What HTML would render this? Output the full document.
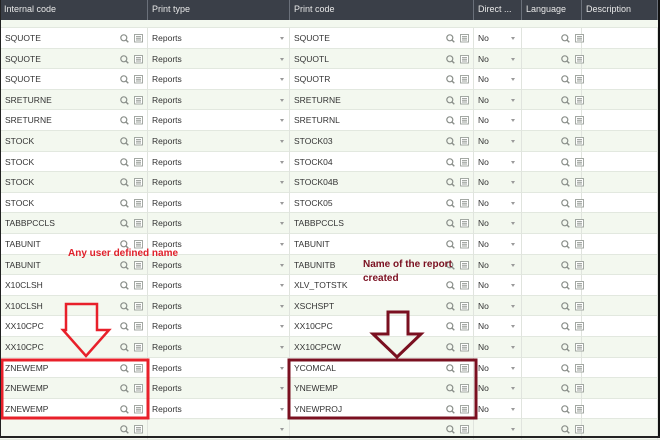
<!DOCTYPE html>
<html><head><meta charset="utf-8"><style>
*{margin:0;padding:0;box-sizing:border-box}
body{width:660px;height:438px;overflow:hidden;background:#fff;font-family:"Liberation Sans",sans-serif;font-size:8.5px;color:#333;position:relative}
.hdr{position:absolute;left:0;top:0;width:660px;height:20px;background:#3a3f48;color:#e8e8e8;font-size:9px}
.hdr div{position:absolute;top:0;height:20px;line-height:18px;padding-left:4px;border-right:1px solid #6a707a}
.r{position:absolute;left:0;width:660px;height:20.6px;border-bottom:1px solid #e2e8df}
.g{background:#f3f8ef}
.c{position:absolute;top:0;height:20.6px;line-height:20px;padding-left:4px;border-right:1px solid #e0e4de;white-space:nowrap}
.c1{left:1px;width:147px}.c2{left:148px;width:142px}.c3{left:290px;width:184px}.c4{left:474px;width:48px}.c5{left:522px;width:60px}.c6{left:582px;width:76px}
.ic{position:absolute;top:6px;width:24px;height:9px}
.dd{position:absolute;top:9px;width:0;height:0;border-left:2.5px solid transparent;border-right:2.5px solid transparent;border-top:3px solid #999}
.frame{position:absolute;right:0;top:0;width:2px;height:438px;background:#111}
.frameb{position:absolute;left:0;bottom:0;width:660px;height:2px;background:#222}
.framel{position:absolute;left:0;top:0;width:1px;height:438px;background:#222}
.ann{position:absolute;font-weight:bold;font-size:10px;font-family:"Liberation Sans",sans-serif}
</style></head><body>
<svg width="0" height="0" style="position:absolute"><defs>
<symbol id="i" viewBox="0 0 24 9"><circle cx="3.8" cy="3.8" r="3" fill="none" stroke="#8a8f8a" stroke-width="1.2"/><line x1="6" y1="6" x2="8.3" y2="8.3" stroke="#8a8f8a" stroke-width="1.4"/><rect x="14.5" y="0.5" width="8" height="7.5" fill="#fff" stroke="#9a9f9a" stroke-width="0.9"/><line x1="16" y1="2.6" x2="21" y2="2.6" stroke="#9a9f9a"/><line x1="16" y1="4.3" x2="21" y2="4.3" stroke="#9a9f9a"/><line x1="16" y1="6" x2="21" y2="6" stroke="#9a9f9a"/></symbol>
</defs></svg>
<div class="hdr"><div style="left:0;width:148px">Internal code</div><div style="left:148px;width:142px">Print type</div><div style="left:290px;width:184px">Print code</div><div style="left:474px;width:48px">Direct ...</div><div style="left:522px;width:60px">Language</div><div style="left:582px;width:76px">Description</div></div>
<div class="r g" style="top:20px;height:8px"></div>

<div id="rows"></div>
<script>
var d=[["SQUOTE","SQUOTE"],["SQUOTE","SQUOTL"],["SQUOTE","SQUOTR"],["SRETURNE","SRETURNE"],["SRETURNE","SRETURNL"],["STOCK","STOCK03"],["STOCK","STOCK04"],["STOCK","STOCK04B"],["STOCK","STOCK05"],["TABBPCCLS","TABBPCCLS"],["TABUNIT","TABUNIT"],["TABUNIT","TABUNITB"],["X10CLSH","XLV_TOTSTK"],["X10CLSH","XSCHSPT"],["XX10CPC","XX10CPC"],["XX10CPC","XX10CPCW"],["ZNEWEMP","YCOMCAL"],["ZNEWEMP","YNEWEMP"],["ZNEWEMP","YNEWPROJ"],["",""]];
var h="";
function ic(x){return '<svg class="ic" style="left:'+x+'px" viewBox="0 0 24 9"><use href="#i"/></svg>';}
for(var i=0;i<d.length;i++){var t=28+i*20.6;var last=i==d.length-1;
h+='<div class="r'+(i%2?' g':'')+'" style="top:'+t+'px">'+
'<div class="c c1">'+d[i][0]+'</div>'+ic(120)+
'<div class="c c2">'+(last?'':'Reports')+'</div><div class="dd" style="left:280px"></div>'+
'<div class="c c3">'+d[i][1]+'</div>'+ic(446)+
'<div class="c c4">'+(last?'':'No')+'</div><div class="dd" style="left:511px"></div>'+
'<div class="c c5"></div>'+ic(561)+
'<div class="c c6"></div></div>';}
document.getElementById("rows").innerHTML=h;
</script>

<div class="ann" style="left:68px;top:248px;color:#e0202a">Any user defined name</div>
<div class="ann" style="left:363px;top:258px;color:#7a1020;line-height:14px">Name of the report<br>created</div>
<svg style="position:absolute;left:0;top:0" width="660" height="438">
<polygon points="66,304 97,304 97,330 109,330 86,356 63,330 66,330" fill="none" stroke="#e8202a" stroke-width="2.5"/>
<rect x="2" y="360" width="146" height="58" fill="none" stroke="#e8202a" stroke-width="3"/>
<polygon points="388,312 408,312 408,334 421,334 397,357 373,334 388,334" fill="none" stroke="#7a1020" stroke-width="3"/>
<rect x="289" y="360" width="187" height="58" fill="none" stroke="#7a1020" stroke-width="3"/>
</svg>
<div class="frame"></div><div class="frameb"></div><div class="framel"></div>
</body></html>
